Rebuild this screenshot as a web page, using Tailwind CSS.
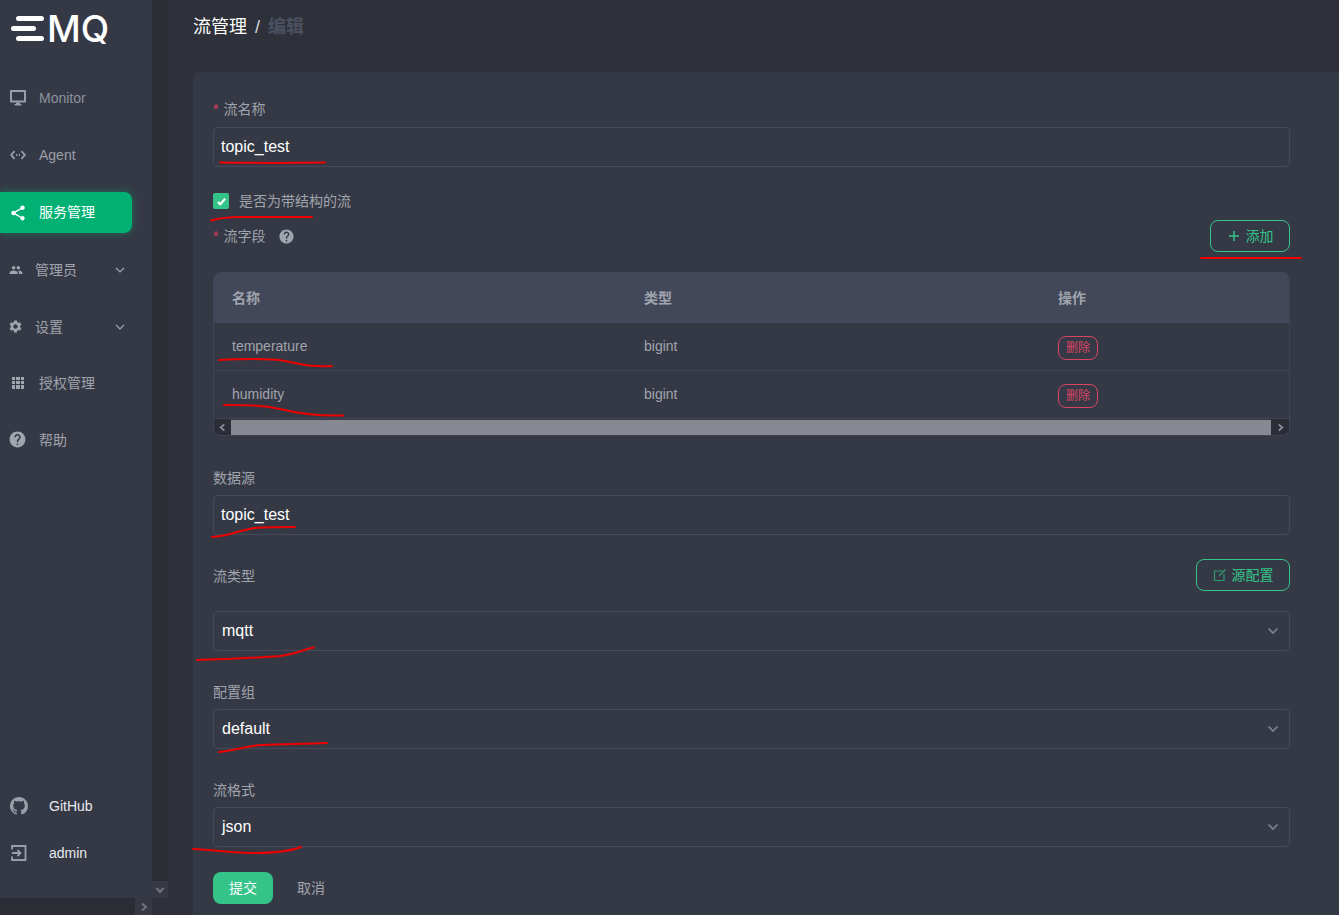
<!DOCTYPE html>
<html lang="zh">
<head>
<meta charset="utf-8">
<title>流管理</title>
<script src="https://cdn.jsdelivr.net/npm/@tailwindcss/browser@4"></script>
</head>
<body class="m-0 bg-[#2e3139]">
<div class="relative flex h-[915px] w-[1339px] overflow-hidden bg-[#2e3139] font-['Liberation_Sans','Noto_Sans_CJK_SC',sans-serif] text-sm text-[#a0a4ad]">

  <!-- left column -->
  <div class="flex w-[168px] shrink-0 flex-col">
    <div class="flex h-[898px]">
      <aside class="flex w-[152px] flex-col bg-[#353945] pb-[30px]">
        <div class="flex h-[78px] items-start pl-[11px] pt-[16px]">
          <div class="flex w-[36px] flex-col items-start gap-[5px]">
            <span class="ml-[5px] block h-[5px] w-[28px] rounded-full bg-white"></span>
            <span class="block h-[5px] w-[25px] rounded-full bg-white"></span>
            <span class="ml-[5px] block h-[5px] w-[28px] rounded-full bg-white"></span>
          </div>
          <span class="-mt-[5px] font-['Inter',sans-serif] text-[37px] leading-[36px] font-medium text-white">MQ</span>
        </div>
        <nav class="flex flex-col gap-4">
          <div class="flex h-[41px] items-center pb-[2px] pl-[10px] text-[#8d929e]">
            <svg class="w-[16px] h-[16px]" viewBox="0 0 16 16"><path d="M1 0h14a1 1 0 0 1 1 1v10.500a1 1 0 0 1-1 1H1a1 1 0 0 1-1-1V1a1 1 0 0 1 1-1zM2 2v8.500h12V2z" fill="#9a9ea8" fill-rule="evenodd"/><path d="M6 12.500h4V14h1.500v1.500h-7V14H6z" fill="#9a9ea8"/></svg>
            <span class="ml-[13px]">Monitor</span>
          </div>
          <div class="flex h-[41px] items-center pb-[2px] pl-[10px] text-[#9a9ea8]">
            <svg class="w-[16px] h-[16px]" viewBox="0 0 16 16" fill="none" stroke="#9a9ea8" stroke-width="1.800"><path d="M4.500 4.200 1.200 8l3.300 3.800M11.500 4.200 14.800 8l-3.300 3.800"/><path d="M6 8h1.200M8.800 8H10" stroke-width="2"/></svg>
            <span class="ml-[13px]">Agent</span>
          </div>
          <div class="flex h-[41px] w-[132px] items-center rounded-r-[8px] bg-[#00b173] pl-[9px] text-white shadow-[0_0_8px_rgba(0,177,115,0.45)]">
            <svg class="w-[18px] h-[18px]" viewBox="0 0 24 24" fill="#fff"><path d="M18 16.080c-.76 0-1.440.3-1.960.77L8.910 12.700c.05-.23.09-.46.09-.7s-.04-.47-.09-.7l7.050-4.110c.54.5 1.250.81 2.040.81 1.660 0 3-1.340 3-3s-1.340-3-3-3-3 1.340-3 3c0 .24.04.47.09.7L8.040 9.810C7.500 9.310 6.790 9 6 9c-1.660 0-3 1.340-3 3s1.340 3 3 3c.79 0 1.500-.31 2.040-.81l7.120 4.160c-.05.21-.08.43-.08.65 0 1.610 1.310 2.920 2.920 2.920 1.610 0 2.920-1.310 2.920-2.920s-1.310-2.920-2.920-2.920z"/></svg>
            <span class="ml-[12px] pb-[1px]">服务管理</span>
          </div>
          <div class="flex h-[41px] items-center pl-[9px]">
            <svg class="w-[14px] h-[14px]" viewBox="0 0 24 24" fill="#a0a4ad"><path d="M16 11c1.660 0 2.990-1.340 2.990-3S17.660 5 16 5c-1.660 0-3 1.340-3 3s1.340 3 3 3zm-8 0c1.660 0 2.990-1.340 2.990-3S9.660 5 8 5C6.340 5 5 6.340 5 8s1.340 3 3 3zm0 2c-2.330 0-7 1.170-7 3.500V19h14v-2.500c0-2.330-4.670-3.500-7-3.500zm8 0c-.29 0-.62.02-.97.05 1.160.84 1.970 1.970 1.970 3.450V19h6v-2.500c0-2.330-4.670-3.500-7-3.500z"/></svg>
            <span class="ml-[12px]">管理员</span>
            <svg class="ml-auto mr-[27px] w-[10px] h-[10px]" viewBox="0 0 10 10" fill="none" stroke="#a0a4ad" stroke-width="1.200"><path d="M1 3l4 4 4-4"/></svg>
          </div>
          <div class="flex h-[41px] items-center pl-[8px]">
            <svg class="w-[15px] h-[15px]" viewBox="0 0 24 24" fill="#a0a4ad"><path d="M19.140 12.940c.04-.3.06-.61.06-.94 0-.32-.02-.64-.07-.94l2.030-1.580c.18-.14.23-.41.12-.61l-1.920-3.320c-.12-.22-.37-.29-.59-.22l-2.390.96c-.5-.38-1.030-.7-1.620-.94l-.36-2.540c-.04-.24-.24-.41-.48-.41h-3.840c-.24 0-.43.17-.47.41l-.36 2.540c-.59.24-1.130.57-1.620.94l-2.390-.96c-.22-.08-.47 0-.59.22L2.740 8.870c-.12.21-.08.47.12.61l2.030 1.580c-.05.3-.09.63-.09.94s.02.64.07.94l-2.030 1.580c-.18.14-.23.41-.12.61l1.920 3.320c.12.22.37.29.59.22l2.390-.96c.5.38 1.030.7 1.620.94l.36 2.540c.05.24.24.41.48.41h3.840c.24 0 .44-.17.47-.41l.36-2.540c.59-.24 1.130-.56 1.620-.94l2.390.96c.22.08.47 0 .59-.22l1.920-3.320c.12-.22.07-.47-.12-.61l-2.010-1.580zM12 15.600c-1.980 0-3.600-1.620-3.600-3.600s1.620-3.600 3.600-3.600 3.600 1.620 3.600 3.600-1.620 3.600-3.600 3.600z"/></svg>
            <span class="ml-[12px]">设置</span>
            <svg class="ml-auto mr-[27px] w-[10px] h-[10px]" viewBox="0 0 10 10" fill="none" stroke="#a0a4ad" stroke-width="1.200"><path d="M1 3l4 4 4-4"/></svg>
          </div>
          <div class="flex h-[41px] items-center pb-[2px] pl-[12px]">
            <div class="grid h-[12px] w-[12px] grid-cols-3 gap-[1px]">
              <span class="bg-[#a0a4ad]"></span><span class="bg-[#a0a4ad]"></span><span class="bg-[#a0a4ad]"></span>
              <span class="bg-[#a0a4ad]"></span><span class="bg-[#a0a4ad]"></span><span class="bg-[#a0a4ad]"></span>
              <span class="bg-[#a0a4ad]"></span><span class="bg-[#a0a4ad]"></span><span class="bg-[#a0a4ad]"></span>
            </div>
            <span class="ml-[15px]">授权管理</span>
          </div>
          <div class="flex h-[41px] items-center pb-[2px] pl-[8px]">
            <svg class="w-[19px] h-[19px]" viewBox="0 0 24 24" fill="#a0a4ad"><path d="M12 2C6.480 2 2 6.480 2 12s4.480 10 10 10 10-4.480 10-10S17.520 2 12 2zm1 17h-2v-2h2v2zm2.070-7.750l-.9.92C13.450 12.900 13 13.500 13 15h-2v-.5c0-1.100.45-2.100 1.170-2.830l1.240-1.260c.37-.36.59-.86.59-1.410 0-1.100-.9-2-2-2s-2 .9-2 2H8c0-2.210 1.790-4 4-4s4 1.790 4 4c0 .88-.36 1.680-.93 2.250z"/></svg>
            <span class="ml-[12px]">帮助</span>
          </div>
        </nav>
        <div class="mt-auto flex flex-col gap-[17px] text-[#e8eaee]">
          <div class="flex h-[30px] items-center pl-[10px]">
            <svg class="w-[18px] h-[18px]" viewBox="0 0 16 16" fill="#9a9ea8"><path d="M8 0C3.580 0 0 3.580 0 8c0 3.540 2.290 6.530 5.470 7.590.4.07.55-.17.55-.38 0-.19-.01-.82-.01-1.490-2.010.37-2.530-.49-2.690-.94-.09-.23-.48-.94-.82-1.130-.28-.15-.68-.52-.01-.53.63-.01 1.080.58 1.230.82.72 1.210 1.870.87 2.330.66.07-.52.28-.87.51-1.070-1.780-.2-3.640-.89-3.640-3.950 0-.87.31-1.590.82-2.150-.08-.2-.36-1.020.08-2.120 0 0 .67-.21 2.200.82.64-.18 1.320-.27 2-.27.68 0 1.360.09 2 .27 1.530-1.040 2.200-.82 2.200-.82.44 1.100.16 1.920.08 2.120.51.56.82 1.270.82 2.150 0 3.070-1.870 3.750-3.650 3.950.29.25.54.73.54 1.480 0 1.070-.01 1.930-.01 2.200 0 .21.15.46.55.38A8.013 8.013 0 0016 8c0-4.420-3.580-8-8-8z"/></svg>
            <span class="ml-[21px]">GitHub</span>
          </div>
          <div class="flex h-[30px] items-center pl-[11px]">
            <svg class="w-[16px] h-[16px]" viewBox="0 0 16 16" fill="none" stroke="#9a9ea8" stroke-width="1.800"><path d="M1 4.500V1h13.500v14H1v-3.500"/><path d="M1 8h8M6.500 5l3 3-3 3"/></svg>
            <span class="ml-[22px]">admin</span>
          </div>
        </div>
      </aside>
      <div class="flex w-[16px] flex-col justify-end bg-[#2b2d35]">
        <div class="flex h-[17px] items-center justify-center bg-[#363942]">
          <svg class="w-[10px] h-[10px]" viewBox="0 0 10 10" fill="none" stroke="#6f737d" stroke-width="2"><path d="M1.500 3l3.500 4 3.500-4"/></svg>
        </div>
      </div>
    </div>
    <div class="flex h-[17px] w-[152px] justify-end bg-[#2b2d35]">
      <div class="flex w-[17px] items-center justify-center bg-[#363942]">
        <svg class="w-[10px] h-[10px]" viewBox="0 0 10 10" fill="none" stroke="#6f737d" stroke-width="2"><path d="M3 1.500l4 3.500-4 3.500"/></svg>
      </div>
    </div>
  </div>

  <!-- main -->
  <main class="flex min-w-0 flex-1 flex-col">
    <header class="flex h-[72px] shrink-0 items-start pl-[25px] pt-[15px] text-lg leading-[24px]">
      <span class="text-white">流管理</span>
      <span class="mx-[8px] text-[#d8dade]">/</span>
      <span class="font-bold text-[#4c5162]">编辑</span>
    </header>

    <section class="ml-[25px] flex-1 rounded-tl-[6px] bg-[#353945] pl-[20px] pr-[49px] pt-[26px]">
      <div class="flex h-[22px] items-center"><span class="mr-[5px] text-[#e0395f]">*</span>流名称</div>
      <div class="mt-[7px] flex h-[40px] items-center rounded-[4px] border border-[#454a5b] pl-[7px] text-base text-white">topic_test</div>

      <div class="mt-[26px] flex h-[16px] items-center">
        <span class="flex h-[16px] w-[16px] items-center justify-center rounded-[2px] bg-[#34c388]">
          <svg class="w-[9px] h-[9px]" viewBox="0 0 10 10" fill="none" stroke="#fff" stroke-width="2.400"><path d="M1 5.500l2.600 2.400L9 2"/></svg>
        </span>
        <span class="ml-[10px]">是否为带结构的流</span>
      </div>

      <div class="mt-[11px] flex h-[32px] items-center">
        <span class="mr-[5px] text-[#e0395f]">*</span>流字段
        <svg class="ml-[13px] w-[17px] h-[17px]" viewBox="0 0 24 24" fill="#a0a4ad"><path d="M12 2C6.480 2 2 6.480 2 12s4.480 10 10 10 10-4.480 10-10S17.520 2 12 2zm1 17h-2v-2h2v2zm2.070-7.750l-.9.92C13.450 12.900 13 13.500 13 15h-2v-.5c0-1.100.45-2.100 1.170-2.830l1.240-1.260c.37-.36.59-.86.59-1.410 0-1.100-.9-2-2-2s-2 .9-2 2H8c0-2.210 1.790-4 4-4s4 1.790 4 4c0 .88-.36 1.680-.93 2.250z"/></svg>
        <button class="ml-auto flex h-[32px] w-[80px] items-center justify-center rounded-[8px] border border-[#34c388] text-sm text-[#34c388]">
          <svg class="mr-[6px] ml-[1px] w-[12px] h-[12px]" viewBox="0 0 12 12" fill="none" stroke="#34c388" stroke-width="1.500"><path d="M6 1v10M1 6h10"/></svg>添加
        </button>
      </div>

      <div class="mt-[20px] h-[164px] overflow-hidden rounded-[8px] border border-[#3f4354] border-t-0">
        <div class="grid h-[51px] grid-cols-[412px_414px_1fr] items-center bg-[#42485a] pl-[18px] text-sm font-bold">
          <span>名称</span><span>类型</span><span>操作</span>
        </div>
        <div class="grid h-[48px] grid-cols-[412px_414px_1fr] items-center border-b border-[#404456] pb-[2px] pl-[18px]">
          <span>temperature</span><span>bigint</span>
          <span class="mt-[4px] flex h-[24px] w-[40px] items-center justify-center rounded-[8px] border border-[#dc4464] text-xs text-[#dc4464]">删除</span>
        </div>
        <div class="grid h-[48px] grid-cols-[412px_414px_1fr] items-center border-b border-[#404456] pb-[2px] pl-[18px]">
          <span>humidity</span><span>bigint</span>
          <span class="mt-[4px] flex h-[24px] w-[40px] items-center justify-center rounded-[8px] border border-[#dc4464] text-xs text-[#dc4464]">删除</span>
        </div>
        <div class="flex h-[16px] items-stretch">
          <div class="flex w-[17px] items-center justify-center bg-[#2b2e37]">
            <svg class="w-[9px] h-[9px]" viewBox="0 0 10 10" fill="none" stroke="#8a8e98" stroke-width="2"><path d="M7 1.500L3 5l4 3.500"/></svg>
          </div>
          <div class="mt-[1px] flex-1 bg-[#868992]"></div>
          <div class="flex w-[18px] items-center justify-center bg-[#2b2e37]">
            <svg class="w-[9px] h-[9px]" viewBox="0 0 10 10" fill="none" stroke="#8a8e98" stroke-width="2"><path d="M3 1.500L7 5l-4 3.500"/></svg>
          </div>
        </div>
      </div>

      <div class="mt-[31px] flex h-[22px] items-center">数据源</div>
      <div class="mt-[6px] flex h-[40px] items-center rounded-[4px] border border-[#454a5b] pl-[7px] text-base text-white">topic_test</div>

      <div class="mt-[24px] flex h-[32px] items-center">
        <span class="pt-[2px]">流类型</span>
        <button class="ml-auto flex h-[32px] w-[94px] items-center justify-center rounded-[8px] border border-[#34c388] text-sm text-[#34c388]">
          <svg class="mr-[5px] w-[14px] h-[14px]" viewBox="0 0 14 14" fill="none" stroke="#2f9a70" stroke-width="1.200"><path d="M10 3H1.500v9.500H11V6"/><path d="M6 8l6.500-6.500"/></svg>源配置
        </button>
      </div>
      <div class="mt-[20px] flex h-[40px] items-center rounded-[4px] border border-[#454a5b] pl-[8px] pr-[10px] text-base text-white">mqtt
        <svg class="ml-auto w-[12px] h-[12px]" viewBox="0 0 12 12" fill="none" stroke="#7f838e" stroke-width="1.600"><path d="M1.500 3.500L6 8l4.500-4.500"/></svg>
      </div>

      <div class="mt-[30px] flex h-[22px] items-center">配置组</div>
      <div class="mt-[6px] flex h-[40px] items-center rounded-[4px] border border-[#454a5b] pl-[8px] pr-[10px] text-base text-white">default
        <svg class="ml-auto w-[12px] h-[12px]" viewBox="0 0 12 12" fill="none" stroke="#7f838e" stroke-width="1.600"><path d="M1.500 3.500L6 8l4.500-4.500"/></svg>
      </div>

      <div class="mt-[30px] flex h-[22px] items-center">流格式</div>
      <div class="mt-[6px] flex h-[40px] items-center rounded-[4px] border border-[#454a5b] pl-[8px] pr-[10px] text-base text-white">json
        <svg class="ml-auto w-[12px] h-[12px]" viewBox="0 0 12 12" fill="none" stroke="#7f838e" stroke-width="1.600"><path d="M1.500 3.500L6 8l4.500-4.500"/></svg>
      </div>

      <div class="mt-[25px] flex items-center">
        <button class="h-[32px] w-[60px] rounded-[8px] bg-[#34c388] text-white">提交</button>
        <span class="ml-[24px]">取消</span>
      </div>
    </section>
  </main>

  <!-- red pen annotations drawn over the page -->
  <svg class="pointer-events-none absolute left-0 top-0" width="1339" height="915" viewBox="0 0 1339 915" fill="none" stroke="#ee0000" stroke-width="2" stroke-linecap="round">
    <path d="M220 162.500 C 255 163 290 163 325 162.500"/>
    <path d="M211 220.500 C 220 218 228 217 240 217 L312 217"/>
    <path d="M1201 258 L1301 258"/>
    <path d="M219 360 C 240 359 268 358 285 361 C 300 364 310 367 332 366"/>
    <path d="M224 405 C 245 405 262 405 280 409 C 300 414 320 416 343 415.500"/>
    <path d="M212 537 C 230 536 240 530 255 528 C 270 527 285 527 295 527"/>
    <path d="M197 660 C 225 659 255 658 280 656 C 295 654 305 649 314 647.500"/>
    <path d="M219 752 C 235 751 245 746 262 745 C 285 744 305 744 327 743"/>
    <path d="M193 849 C 215 850 235 853 255 853 C 275 853 290 851 301 847"/>
  </svg>
</div>
</body>
</html>
